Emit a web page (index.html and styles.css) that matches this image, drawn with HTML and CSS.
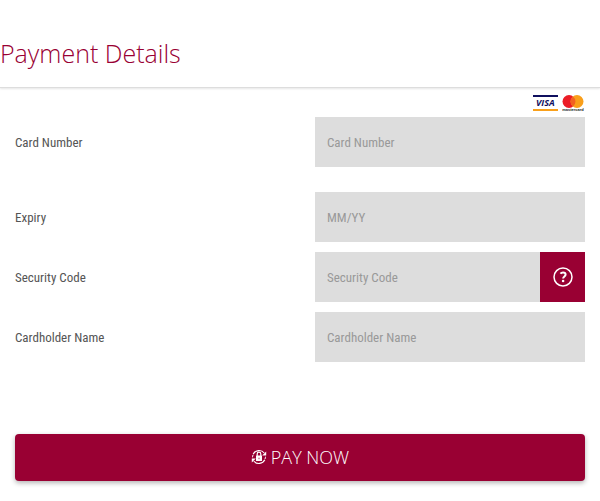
FILE: index.html
```html
<!DOCTYPE html>
<html lang="en">
<head>
  <meta charset="utf-8">
  <meta name="viewport" content="width=device-width, initial-scale=1">
  <title>Payment Details</title>
  <link rel="stylesheet" href="styles.css">
</head>
<body>

<h1 class="title">Payment Details</h1>

<form class="payment-form">

  <!-- accepted cards -->
  <div class="cards">
    <svg class="card-logo visa" viewBox="0 0 25 16" role="img" aria-label="Visa">
      <rect width="25" height="2" fill="#10105f"/>
      <rect y="14" width="25" height="2" fill="#f9a01b"/>
      <text x="3" y="11" class="visa-text">VISA</text>
    </svg>
    <svg class="card-logo mastercard" viewBox="0 0 22 17" role="img" aria-label="Mastercard">
      <circle cx="7" cy="6.5" r="6.5" fill="#eb1c26"/>
      <circle cx="15" cy="6.5" r="6.5" fill="#f99f1b"/>
      <path d="M11 1.4a6.5 6.5 0 0 1 0 10.200a6.500 6.500 0 0 1 0-10.200z" fill="#f26122"/>
      <text x="11" y="16" text-anchor="middle" class="mastercard-text">mastercard</text>
    </svg>
  </div>

  <div class="row row-number">
    <label for="card-number">Card Number</label>
    <div class="field">
      <input type="text" id="card-number" placeholder="Card Number">
    </div>
  </div>

  <div class="row">
    <label for="expiry">Expiry</label>
    <div class="field">
      <input type="text" id="expiry" placeholder="MM/YY">
    </div>
  </div>

  <div class="row">
    <label for="security-code">Security Code</label>
    <div class="field">
      <input type="text" id="security-code" placeholder="Security Code">
      <button type="button" class="help" aria-label="Help">
        <svg class="help-icon" viewBox="0 0 20 20" aria-hidden="true">
          <circle cx="10" cy="10" r="9" fill="none" stroke="#fff" stroke-width="1.5"/>
          <path d="M7.400 6.600C8.200 5.700 9 5.400 10 5.400c1.600 0 2.600.8 2.600 2.100 0 1.900-2.500 2-2.500 4" fill="none" stroke="#fff" stroke-width="2"/>
          <circle cx="10.100" cy="14" r="1.300" fill="#fff"/>
        </svg>
      </button>
    </div>
  </div>

  <div class="row">
    <label for="cardholder">Cardholder Name</label>
    <div class="field">
      <input type="text" id="cardholder" placeholder="Cardholder Name">
    </div>
  </div>

  <button type="submit" class="pay">
    <svg class="pay-icon" viewBox="0 0 16 16" aria-hidden="true">
      <path d="M2.200 5.200A6.500 6.500 0 0 1 13.200 4M13.800 10.800A6.500 6.500 0 0 1 2.800 12" fill="none" stroke="#fff" stroke-width="1.200"/>
      <path d="M15.200 2.600v4h-4zM.8 13.400v-4h4z" fill="#fff"/>
      <path d="M1.500 8.300A6.500 6.500 0 0 1 2 6M14.500 7.700A6.500 6.500 0 0 1 14 10" fill="none" stroke="#fff"/>
      <rect x="5" y="6.500" width="6" height="5.500" rx=".6" fill="#fff"/>
      <path d="M6.200 7V5a1.800 1.800 0 0 1 3.600 0V7" fill="none" stroke="#fff" stroke-width="1.200"/>
      <path d="M8 8.700v1.500" stroke="#903" stroke-width=".8"/>
    </svg>
    PAY NOW
  </button>

</form>

</body>
</html>
```

FILE: styles.css
```css
* {
  box-sizing: border-box;
}

body {
  margin: 0;
  background: #fff;
  color: #555;
  font-family: "Roboto Condensed", Roboto, sans-serif;
  font-size: 13px;
}

/* Page heading */
.title {
  margin: 0;
  padding: 36px 0 16px;
  border-bottom: 1px solid #ddd;
  box-shadow: 0 1px 2px rgba(0, 0, 0, 0.1);
  color: #990033;
  font-family: "Open Sans", sans-serif;
  font-size: 25px;
  font-weight: 300;
  line-height: 35px;
}

.payment-form {
  padding: 7px 15px 20px;
}

/* Card logos */
.cards {
  display: flex;
  justify-content: flex-end;
  gap: 4px;
  height: 17px;
  margin-bottom: 5px;
  padding-right: 1px;
}

.visa {
  width: 25px;
  height: 16px;
}

.mastercard {
  width: 22px;
  height: 17px;
}

.visa-text {
  fill: #10105f;
  font-family: "Open Sans", sans-serif;
  font-size: 9px;
  font-style: italic;
  font-weight: 700;
}

.mastercard-text {
  fill: #222;
  font-family: "Liberation Sans", sans-serif;
  font-size: 4px;
  font-weight: 700;
}

/* Form rows */
.row {
  display: grid;
  grid-template-columns: 1fr 270px;
  align-items: center;
  margin-bottom: 10px;
}

.row-number {
  margin-bottom: 25px;
}

.field {
  display: flex;
  height: 50px;
  background: #ddd;
}

.field input {
  flex: 1;
  min-width: 0;
  padding: 0 12px;
  border: 0;
  background: transparent;
  color: #555;
  font: inherit;
}

.field input::placeholder {
  color: #999;
  opacity: 1;
}

.help {
  display: flex;
  align-items: center;
  justify-content: center;
  width: 45px;
  padding: 0;
  border: 0;
  background: #990033;
}

.help-icon {
  width: 20px;
  height: 20px;
}

/* Submit button */
.pay {
  display: flex;
  align-items: center;
  justify-content: center;
  gap: 4px;
  width: 100%;
  height: 47px;
  margin-top: 72px;
  padding: 0 0 1px;
  border: 0;
  border-radius: 4px;
  background: #990033;
  box-shadow: 0 2px 5px rgba(0, 0, 0, 0.3);
  color: #fff;
  font-family: "Open Sans", sans-serif;
  font-size: 18px;
  font-weight: 300;
}

.pay-icon {
  width: 16px;
  height: 16px;
}
```
